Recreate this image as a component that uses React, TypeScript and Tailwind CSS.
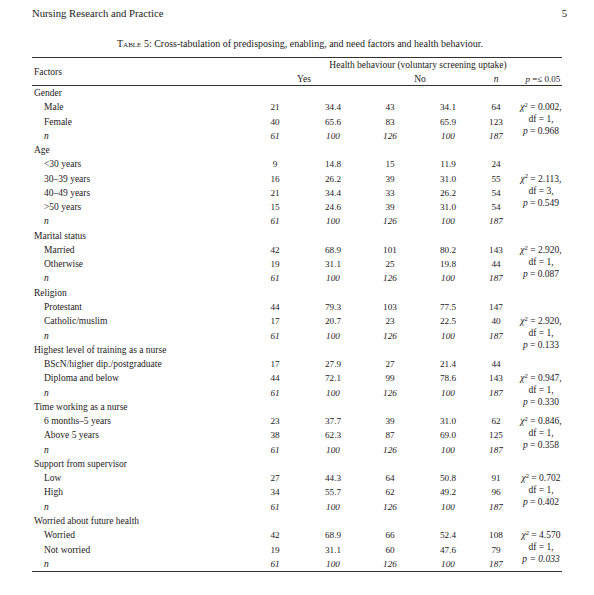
import React from "react";

type Row = { label: string; v: string[]; italic?: boolean };
type Group = {
  title: string;
  rows: Row[];
  stats: { chi: string; df: string; p: string; pItalic?: boolean };
  start: string;
};

const nRow: Row = { label: "n", v: ["61", "100", "126", "100", "187"], italic: true };

const groups: Group[] = [
  {
    title: "Gender",
    rows: [
      { label: "Male", v: ["21", "34.4", "43", "34.1", "64"] },
      { label: "Female", v: ["40", "65.6", "83", "65.9", "123"] },
      nRow,
    ],
    stats: { chi: "0.002,", df: "1,", p: "0.968" },
    start: "row-start-2",
  },
  {
    title: "Age",
    rows: [
      { label: "<30 years", v: ["9", "14.8", "15", "11.9", "24"] },
      { label: "30–39 years", v: ["16", "26.2", "39", "31.0", "55"] },
      { label: "40–49 years", v: ["21", "34.4", "33", "26.2", "54"] },
      { label: ">50 years", v: ["15", "24.6", "39", "31.0", "54"] },
      nRow,
    ],
    stats: { chi: "2.113,", df: "3,", p: "0.549" },
    start: "row-start-3",
  },
  {
    title: "Marital status",
    rows: [
      { label: "Married", v: ["42", "68.9", "101", "80.2", "143"] },
      { label: "Otherwise", v: ["19", "31.1", "25", "19.8", "44"] },
      nRow,
    ],
    stats: { chi: "2.920,", df: "1,", p: "0.087" },
    start: "row-start-2",
  },
  {
    title: "Religion",
    rows: [
      { label: "Protestant", v: ["44", "79.3", "103", "77.5", "147"] },
      { label: "Catholic/muslim", v: ["17", "20.7", "23", "22.5", "40"] },
      nRow,
    ],
    stats: { chi: "2.920,", df: "1,", p: "0.133" },
    start: "row-start-3",
  },
  {
    title: "Highest level of training as a nurse",
    rows: [
      { label: "BScN/higher dip./postgraduate", v: ["17", "27.9", "27", "21.4", "44"] },
      { label: "Diploma and below", v: ["44", "72.1", "99", "78.6", "143"] },
      nRow,
    ],
    stats: { chi: "0.947,", df: "1,", p: "0.330" },
    start: "row-start-3",
  },
  {
    title: "Time working as a nurse",
    rows: [
      { label: "6 months–5 years", v: ["23", "37.7", "39", "31.0", "62"] },
      { label: "Above 5 years", v: ["38", "62.3", "87", "69.0", "125"] },
      nRow,
    ],
    stats: { chi: "0.846,", df: "1,", p: "0.358" },
    start: "row-start-2",
  },
  {
    title: "Support from supervisor",
    rows: [
      { label: "Low", v: ["27", "44.3", "64", "50.8", "91"] },
      { label: "High", v: ["34", "55.7", "62", "49.2", "96"] },
      nRow,
    ],
    stats: { chi: "0.702", df: "1,", p: "0.402" },
    start: "row-start-2",
  },
  {
    title: "Worried about future health",
    rows: [
      { label: "Worried", v: ["42", "68.9", "66", "52.4", "108"] },
      { label: "Not worried", v: ["19", "31.1", "60", "47.6", "79"] },
      nRow,
    ],
    stats: { chi: "4.570", df: "1,", p: "0.033", pItalic: true },
    start: "row-start-2",
  },
];

const valCols = ["col-start-2", "col-start-3", "col-start-4", "col-start-5", "col-start-6"];

function GroupBlock({ g }: { g: Group }) {
  return (
    <div className="grid grid-cols-[218px_50px_66px_48px_68px_28px_58px] auto-rows-[14.27px]">
      <div className="col-start-1 col-span-6 pl-[2px] leading-[14.27px] text-[9.5px] whitespace-nowrap">
        {g.title}
      </div>
      {g.rows.map((r, i) => (
        <React.Fragment key={i}>
          <div
            className={`col-start-1 pl-[12px] leading-[14.27px] text-[9.5px] whitespace-nowrap ${
              r.italic ? "italic" : ""
            }`}
          >
            {r.label}
          </div>
          {r.v.map((v, j) => (
            <div
              key={j}
              className={`${valCols[j]} text-center leading-[14.27px] text-[9.2px] ${
                r.italic ? "italic" : ""
              }`}
            >
              {v}
            </div>
          ))}
        </React.Fragment>
      ))}
      <div
        className={`col-start-7 ${g.start} row-span-1 h-[14.27px] pt-[1px] pl-[4px] leading-[12px] text-[9.5px] text-center whitespace-nowrap`}
      >
        <div>
          <span className="italic">χ</span>
          <sup className="text-[6.5px]">2</sup> = {g.stats.chi}
        </div>
        <div>df = {g.stats.df}</div>
        <div>
          <span className="italic">p</span>{" "}
          <span className={g.stats.pItalic ? "italic" : ""}>= {g.stats.p}</span>
        </div>
      </div>
    </div>
  );
}

export default function App() {
  return (
    <div className="w-[594px] h-[595px] bg-white text-[#1c1a1a] font-['Liberation_Serif',serif] overflow-hidden">
      <div className="h-[26px] flex items-center justify-between pl-[32px] pr-[27px] text-[10.7px]">
        <span>Nursing Research and Practice</span>
        <span>5</span>
      </div>
      <div className="mx-[32px] mt-[11px] h-[14px] leading-[14px] text-center text-[10px] pl-[6px] whitespace-nowrap">
        <span className="[font-variant-caps:small-caps]">Table 5</span>: Cross-tabulation of predisposing,
        enabling, and need factors and health behaviour.
      </div>
      <div className="mx-[32px] mt-[6px] border-t border-b border-[#333]">
        <div className="grid grid-cols-[218px_50px_66px_48px_68px_28px_58px] grid-rows-[14px_14px] h-[28px] border-b border-[#333] text-[9.5px]">
          <div className="col-start-1 row-start-1 row-span-2 flex items-center pl-[2px]">Factors</div>
          <div className="col-start-2 col-span-6 row-start-1 text-center pl-[18px] leading-[14px] whitespace-nowrap">
            Health behaviour (voluntary screening uptake)
          </div>
          <div className="col-start-2 col-span-2 row-start-2 text-center pr-[8px] leading-[14px]">Yes</div>
          <div className="col-start-4 col-span-2 row-start-2 text-center pr-[8px] leading-[14px]">No</div>
          <div className="col-start-6 row-start-2 text-center italic leading-[14px]">n</div>
          <div className="col-start-7 row-start-2 text-center pl-[8px] leading-[14px] whitespace-nowrap text-[9px]">
            <span className="italic">p</span> =≤ 0.05
          </div>
        </div>
        <div>
          {groups.map((g, i) => (
            <GroupBlock key={i} g={g} />
          ))}
        </div>
      </div>
    </div>
  );
}
